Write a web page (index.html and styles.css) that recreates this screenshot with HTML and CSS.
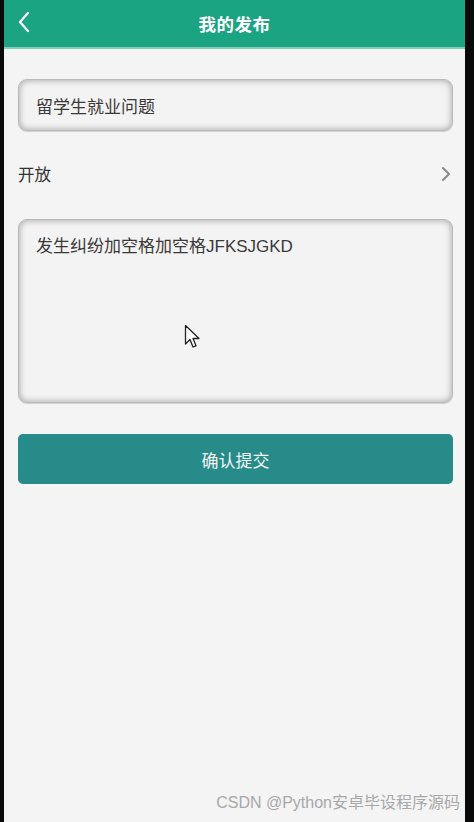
FILE: index.html
```html
<!DOCTYPE html>
<html lang="zh">
<head>
<meta charset="utf-8">
<title>我的发布</title>
<link rel="stylesheet" href="styles.css">
</head>
<body>
<div class="frame">
  <div class="app">
    <header class="topbar">
      <span class="back">
        <svg width="14" height="22" viewBox="0 0 14 22"><path d="M11 2 L3 11 L11 20" fill="none" stroke="#fff" stroke-width="2.2" stroke-linecap="round" stroke-linejoin="round"/></svg>
      </span>
      <h1 class="title">我的发布</h1>
    </header>
    <main class="content">
      <div class="field input">留学生就业问题</div>
      <div class="row">
        <span class="row-label">开放</span>
        <svg class="chev" width="10" height="16" viewBox="0 0 10 16"><path d="M2 2 L8 8 L2 14" fill="none" stroke="#888" stroke-width="2" stroke-linecap="round" stroke-linejoin="round"/></svg>
      </div>
      <div class="field area">发生纠纷加空格加空格JFKSJGKD
        <svg class="cursor" width="18" height="26" viewBox="0 0 18 26"><path d="M1.5 1.5 L1.5 20 L6 15.5 L9 23 L12 21.8 L9 14.5 L15 14.5 Z" fill="#fff" stroke="#222" stroke-width="1.3" stroke-linejoin="round"/></svg>
      </div>
      <button class="submit">确认提交</button>
    </main>
    <div class="watermark">CSDN @Python安卓毕设程序源码</div>
  </div>
</div>
</body>
</html>
```
FILE: styles.css
```css
html, body {
  margin: 0;
  padding: 0;
  background: #0a0a0a;
}
body {
  font-family: "Liberation Sans", Arial, "Noto Sans CJK SC", sans-serif;
}
.frame {
  width: 474px;
  height: 822px;
  display: flex;
}
.app {
  margin-left: 4px;
  width: 461px;
  height: 822px;
  background: #f4f4f4;
  display: flex;
  flex-direction: column;
  position: relative;
}
.topbar {
  height: 47px;
  background: #1ba482;
  border-bottom: 2px solid #7fcfb8;
  box-sizing: content-box;
  display: flex;
  align-items: center;
  justify-content: center;
  position: relative;
}
.back {
  position: absolute;
  left: 13px;
  top: 11px;
  display: flex;
}
.title {
  margin: 0;
  color: #fff;
  font-size: 17.5px;
  font-weight: bold;
  letter-spacing: 0.5px;
}
.content {
  padding: 30px 12px 0 14px;
  display: flex;
  flex-direction: column;
}
.field {
  background: #f3f3f3;
  border: 1px solid #b9b9b9;
  border-radius: 9px;
  box-shadow: inset 0 0 7px rgba(0, 0, 0, 0.35), 0 1px 1px rgba(0,0,0,0.15);
  color: #3a3a3a;
  font-size: 17px;
  box-sizing: border-box;
}
.input {
  height: 52px;
  padding: 0 17px;
  display: flex;
  align-items: center;
}
.row {
  height: 86px;
  display: flex;
  align-items: center;
  justify-content: space-between;
  padding-right: 2px;
  padding-bottom: 2px;
}
.row-label {
  font-size: 16.5px;
  color: #333;
}
.area {
  height: 184px;
  padding: 12px 17px;
  position: relative;
}
.cursor {
  position: absolute;
  left: 165px;
  top: 104px;
}
.submit {
  margin-top: 31px;
  height: 50px;
  border: none;
  border-radius: 5px;
  background: #268b89;
  color: #f4f4f4;
  font-size: 17px;
  font-family: inherit;
}
.watermark {
  position: absolute;
  right: 5px;
  bottom: 9px;
  color: #a8a8a8;
  font-size: 16px;
}
```
